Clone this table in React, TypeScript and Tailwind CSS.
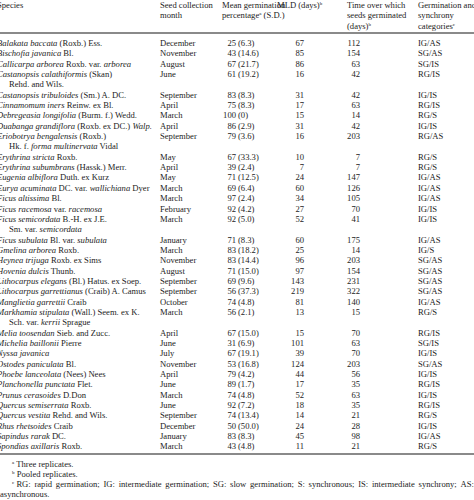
import type { ReactNode } from "react";

type Row = {
  sp: ReactNode;
  sp2?: ReactNode;
  month: string;
  mean: string;
  sd: string;
  mld: string;
  time: string;
  cat: string;
};

const I = ({ children }: { children: ReactNode }) => <i>{children}</i>;

const rows: Row[] = [
  { sp: <><I>Balakata baccata</I> (Roxb.) Ess.</>, month: "December", mean: "25", sd: "(6.3)", mld: "67", time: "112", cat: "IG/AS" },
  { sp: <><I>Bischofia javanica</I> Bl.</>, month: "November", mean: "43", sd: "(14.6)", mld: "85", time: "154", cat: "SG/AS" },
  { sp: <><I>Callicarpa arborea</I> Roxb. var. <I>arborea</I></>, month: "August", mean: "67", sd: "(21.7)", mld: "86", time: "63", cat: "SG/IS" },
  { sp: <><I>Castanopsis calathiformis</I> (Skan)</>, sp2: <>Rehd. and Wils.</>, month: "June", mean: "61", sd: "(19.2)", mld: "16", time: "42", cat: "RG/IS" },
  { sp: <><I>Castanopsis tribuloides</I> (Sm.) A. DC.</>, month: "September", mean: "83", sd: "(8.3)", mld: "31", time: "42", cat: "IG/IS" },
  { sp: <><I>Cinnamomum iners</I> Reinw. ex Bl.</>, month: "April", mean: "75", sd: "(8.3)", mld: "17", time: "63", cat: "RG/IS" },
  { sp: <><I>Debregeasia longifolia</I> (Burm. f.) Wedd.</>, month: "March", mean: "100", sd: "(0)", mld: "15", time: "14", cat: "RG/S" },
  { sp: <><I>Duabanga grandiflora</I> (Roxb. ex DC.) <I>Walp.</I></>, month: "April", mean: "86", sd: "(2.9)", mld: "31", time: "42", cat: "IG/IS" },
  { sp: <><I>Eriobotrya bengalensis</I> (Roxb.)</>, sp2: <>Hk. f. <I>forma multinervata</I> Vidal</>, month: "September", mean: "79", sd: "(3.6)", mld: "16", time: "203", cat: "RG/AS" },
  { sp: <><I>Erythrina stricta</I> Roxb.</>, month: "May", mean: "67", sd: "(33.3)", mld: "10", time: "7", cat: "RG/S" },
  { sp: <><I>Erythrina subumbrans</I> (Hassk.) Merr.</>, month: "April", mean: "39", sd: "(2.4)", mld: "7", time: "7", cat: "RG/S" },
  { sp: <><I>Eugenia albiflora</I> Duth. ex Kurz</>, month: "May", mean: "71", sd: "(12.5)", mld: "24", time: "147", cat: "IG/AS" },
  { sp: <><I>Eurya acuminata</I> DC. var. <I>wallichiana</I> Dyer</>, month: "March", mean: "69", sd: "(6.4)", mld: "60", time: "126", cat: "IG/AS" },
  { sp: <><I>Ficus altissima</I> Bl.</>, month: "March", mean: "97", sd: "(2.4)", mld: "34", time: "105", cat: "IG/AS" },
  { sp: <><I>Ficus racemosa</I> var. <I>racemosa</I></>, month: "February", mean: "92", sd: "(4.2)", mld: "27", time: "70", cat: "IG/IS" },
  { sp: <><I>Ficus semicordata</I> B.-H. ex J.E.</>, sp2: <>Sm. var. <I>semicordata</I></>, month: "March", mean: "92", sd: "(5.0)", mld: "52", time: "41", cat: "IG/IS" },
  { sp: <><I>Ficus subulata</I> Bl. var. <I>subulata</I></>, month: "January", mean: "71", sd: "(8.3)", mld: "60", time: "175", cat: "IG/AS" },
  { sp: <><I>Gmelina arborea</I> Roxb.</>, month: "March", mean: "83", sd: "(18.2)", mld: "25", time: "14", cat: "IG/S" },
  { sp: <><I>Heynea trijuga</I> Roxb. ex Sims</>, month: "November", mean: "83", sd: "(14.4)", mld: "96", time: "203", cat: "SG/AS" },
  { sp: <><I>Hovenia dulcis</I> Thunb.</>, month: "August", mean: "71", sd: "(15.0)", mld: "97", time: "154", cat: "SG/AS" },
  { sp: <><I>Lithocarpus elegans</I> (Bl.) Hatus. ex Soep.</>, month: "September", mean: "69", sd: "(9.6)", mld: "143", time: "231", cat: "SG/AS" },
  { sp: <><I>Lithocarpus garrettianus</I> (Craib) A. Camus</>, month: "September", mean: "56", sd: "(37.3)", mld: "219", time: "322", cat: "SG/AS" },
  { sp: <><I>Manglietia garrettii</I> Craib</>, month: "October", mean: "74", sd: "(4.8)", mld: "81", time: "140", cat: "IG/AS" },
  { sp: <><I>Markhamia stipulata</I> (Wall.) Seem. ex K.</>, sp2: <>Sch. var. <I>kerrii</I> Sprague</>, month: "March", mean: "56", sd: "(2.1)", mld: "13", time: "15", cat: "RG/S" },
  { sp: <><I>Melia toosendan</I> Sieb. and Zucc.</>, month: "April", mean: "67", sd: "(15.0)", mld: "15", time: "70", cat: "RG/IS" },
  { sp: <><I>Michelia baillonii</I> Pierre</>, month: "June", mean: "31", sd: "(6.9)", mld: "101", time: "63", cat: "SG/IS" },
  { sp: <><I>Nyssa javanica</I></>, month: "July", mean: "67", sd: "(19.1)", mld: "39", time: "70", cat: "IG/IS" },
  { sp: <><I>Ostodes paniculata</I> Bl.</>, month: "November", mean: "53", sd: "(16.8)", mld: "124", time: "203", cat: "SG/AS" },
  { sp: <><I>Phoebe lanceolata</I> (Nees) Nees</>, month: "April", mean: "79", sd: "(4.2)", mld: "44", time: "56", cat: "IG/IS" },
  { sp: <><I>Planchonella punctata</I> Flet.</>, month: "June", mean: "89", sd: "(1.7)", mld: "17", time: "35", cat: "RG/IS" },
  { sp: <><I>Prunus cerasoides</I> D.Don</>, month: "March", mean: "74", sd: "(4.8)", mld: "52", time: "63", cat: "IG/IS" },
  { sp: <><I>Quercus semiserrata</I> Roxb.</>, month: "June", mean: "92", sd: "(7.2)", mld: "18", time: "35", cat: "RG/IS" },
  { sp: <><I>Quercus vestita</I> Rehd. and Wils.</>, month: "September", mean: "74", sd: "(13.4)", mld: "14", time: "21", cat: "RG/S" },
  { sp: <><I>Rhus rhetsoides</I> Craib</>, month: "December", mean: "50", sd: "(50.0)", mld: "24", time: "28", cat: "IG/IS" },
  { sp: <><I>Sapindus rarak</I> DC.</>, month: "January", mean: "83", sd: "(8.3)", mld: "45", time: "98", cat: "IG/AS" },
  { sp: <><I>Spondias axillaris</I> Roxb.</>, month: "March", mean: "43", sd: "(4.8)", mld: "11", time: "21", cat: "RG/S" },
];

const Sup = ({ children }: { children: ReactNode }) => (
  <sup className="text-[5px] relative -top-[3px] align-baseline">{children}</sup>
);

const App = () => {
  return (
    <div className="w-[474px] h-[500px] overflow-hidden bg-white text-[#1c1c1c] font-['Liberation_Serif',serif] text-[8.6px] leading-[10.35px]">
      <div className="-ml-[3px] w-[540px]">
        {/* header */}
        <div className="flex h-[32px] whitespace-nowrap">
          <div className="w-[163px]">Species</div>
          <div className="w-[62px]">
            Seed collection
            <br />
            month
          </div>
          <div className="w-[55px]">
            Mean germination
            <br />
            percentage<Sup>a</Sup> (S.D.)
          </div>
          <div className="w-[70px]">
            MLD (days)<Sup>b</Sup>
          </div>
          <div className="w-[71px]">
            Time over which
            <br />
            seeds germinated
            <br />
            (days)<Sup>b</Sup>
          </div>
          <div>
            Germination and
            <br />
            synchrony
            <br />
            categories<Sup>c</Sup>
          </div>
        </div>
        <div className="h-[2px] bg-[#8a8a8a]" />

        {/* body */}
        <div className="pt-[4px] pb-[1px]">
          {rows.map((r, i) => (
            <div key={i} className="flex items-start whitespace-nowrap">
              <div className="w-[163px]">
                <div>{r.sp}</div>
                {r.sp2 && <div className="pl-[12px]">{r.sp2}</div>}
              </div>
              <div className="w-[62px]">{r.month}</div>
              <div className="w-[55px] flex">
                <span className="w-[14px] text-right">{r.mean}</span>
                <span className="pl-[2px]">{r.sd}</span>
              </div>
              <div className="w-[70px]">
                <div className="w-[27px] text-right">{r.mld}</div>
              </div>
              <div className="w-[71px]">
                <div className="w-[13px] text-right">{r.time}</div>
              </div>
              <div>{r.cat}</div>
            </div>
          ))}
        </div>
        <div className="h-[2px] bg-[#8a8a8a]" />
      </div>

      {/* footnotes */}
      <div className="pt-[4px] leading-[10px]">
        <div className="pl-[12px]">
          <Sup>a</Sup> Three replicates.
        </div>
        <div className="pl-[12px]">
          <Sup>b</Sup> Pooled replicates.
        </div>
        <div className="pl-[12px] text-justify [text-align-last:justify] whitespace-nowrap flex justify-between">
          <span>
            <Sup>c</Sup> RG:
          </span>
          <span>rapid</span>
          <span>germination;</span>
          <span>IG:</span>
          <span>intermediate</span>
          <span>germination;</span>
          <span>SG:</span>
          <span>slow</span>
          <span>germination;</span>
          <span>S:</span>
          <span>synchronous;</span>
          <span>IS:</span>
          <span>intermediate</span>
          <span>synchrony;</span>
          <span>AS:</span>
        </div>
        <div>asynchronous.</div>
      </div>
    </div>
  );
};

export default App;
